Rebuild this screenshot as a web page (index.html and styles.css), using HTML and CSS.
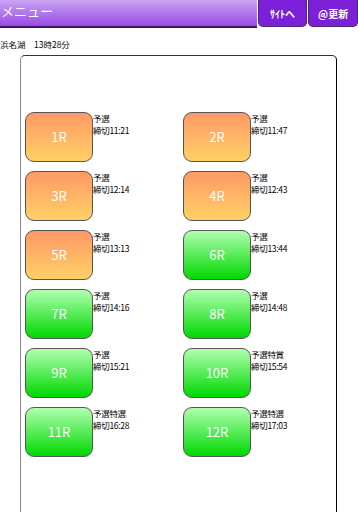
FILE: index.html
```html
<!DOCTYPE html>
<html lang="ja">
<head>
    <meta charset="UTF-8">
    <meta name="viewport" content="width=device-width, initial-scale=1.0">
    <title>メニュー</title>
    <link rel="stylesheet" href="styles.css">
</head>
<body>
    <div class="header">
        <div class="title">メニュー</div>
        <a class="hbtn">ｻｲﾄへ</a>
        <a class="hbtn">@更新</a>
    </div>
    <div class="place">浜名湖　13時28分</div>
    <div class="box">
        <div class="races">
            <div class="race"><div class="tile orange">1R</div><div class="info">予選<br>締切11:21</div></div>
            <div class="race"><div class="tile orange">2R</div><div class="info">予選<br>締切11:47</div></div>
            <div class="race"><div class="tile orange">3R</div><div class="info">予選<br>締切12:14</div></div>
            <div class="race"><div class="tile orange">4R</div><div class="info">予選<br>締切12:43</div></div>
            <div class="race"><div class="tile orange">5R</div><div class="info">予選<br>締切13:13</div></div>
            <div class="race"><div class="tile green">6R</div><div class="info">予選<br>締切13:44</div></div>
            <div class="race"><div class="tile green">7R</div><div class="info">予選<br>締切14:16</div></div>
            <div class="race"><div class="tile green">8R</div><div class="info">予選<br>締切14:48</div></div>
            <div class="race"><div class="tile green">9R</div><div class="info">予選<br>締切15:21</div></div>
            <div class="race"><div class="tile green">10R</div><div class="info">予選特賞<br>締切15:54</div></div>
            <div class="race"><div class="tile green">11R</div><div class="info">予選特選<br>締切16:28</div></div>
            <div class="race"><div class="tile green">12R</div><div class="info">予選特選<br>締切17:03</div></div>
        </div>
    </div>
</body>
</html>
```

FILE: styles.css
```css
body {
    margin: 0;
    font-family: "Noto Sans CJK JP", "Noto Sans", sans-serif;
    background: #fff;
    color: #000;
}
.header {
    display: flex;
    height: 28px;
}
.title {
    width: 257px;
    height: 26px;
    background: linear-gradient(#c8a4f2, #9a4be6);
    border-bottom: 2px solid #3a1466;
    color: #fff;
    font-size: 13px;
    line-height: 22px;
    padding-left: 1px;
}
.hbtn {
    width: 48px;
    height: 26px;
    margin-left: 1px;
    background: #7c1fd8;
    border: 1px solid #4a2a70;
    border-top: none;
    border-radius: 0 0 5px 5px;
    color: #fff;
    font-size: 10px;
    font-weight: bold;
    line-height: 27px;
    text-align: center;
}
.place {
    font-size: 8.5px;
    line-height: 12px;
    margin-top: 10px;
    padding-left: 0;
}
.box {
    margin: 5px 0 0 20px;
    width: 315px;
    height: 470px;
    border: 1px solid #000;
    border-left-color: #888;
    border-top-color: #333;
    border-radius: 5px;
}
.races {
    display: grid;
    grid-template-columns: 158px 158px;
    row-gap: 9px;
    padding: 56px 0 0 4px;
}
.race {
    display: flex;
    align-items: flex-start;
}
.tile {
    width: 66px;
    height: 48px;
    border: 1px solid #555;
    border-radius: 9px;
    color: #fff;
    font-size: 13px;
    line-height: 48px;
    text-align: center;
}
.orange {
    background: linear-gradient(#ff9966, #ffd066);
}
.green {
    background: linear-gradient(#b0ffb0, #00d800);
}
.info {
    font-size: 8.5px;
    line-height: 12px;
    margin-top: 0;
    letter-spacing: -0.3px;
}
```
